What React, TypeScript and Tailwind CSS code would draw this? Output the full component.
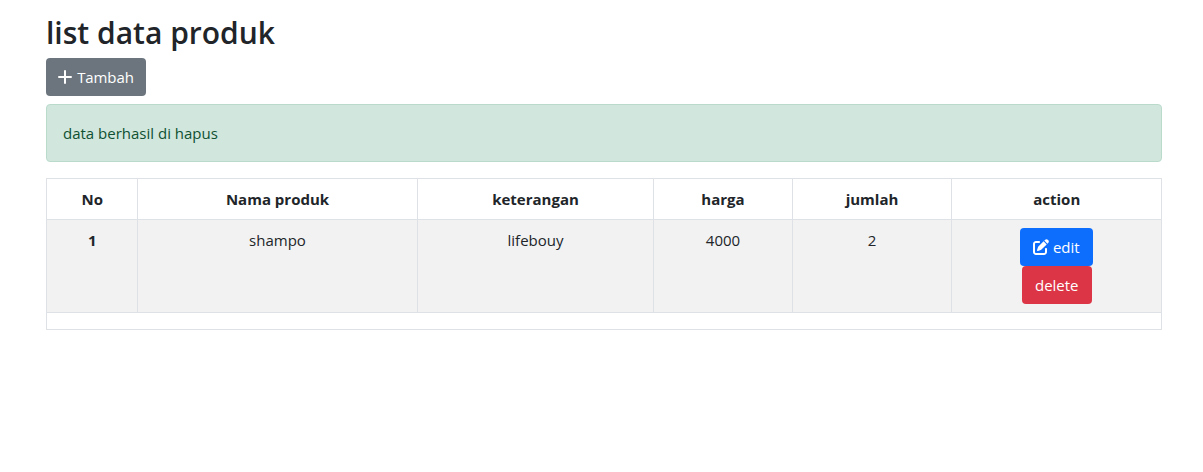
import React from 'react';
import { FaPenToSquare } from 'react-icons/fa6';

const columns = [
  { title: 'No', width: 'w-[90px]' },
  { title: 'Nama produk', width: 'w-[280px]' },
  { title: 'keterangan', width: 'w-[236px]' },
  { title: 'harga', width: 'w-[139px]' },
  { title: 'jumlah', width: 'w-[159px]' },
  { title: 'action', width: '' },
];

function PlusIcon() {
  return (
    <svg width="14" height="14" viewBox="0 0 14 14" fill="none" stroke="currentColor" strokeWidth="2" strokeLinecap="round">
      <path d="M7 1v12M1 7h12" />
    </svg>
  );
}

export default function App() {
  return (
    <div className="min-h-[472px] bg-white px-[46px] pr-[41px] text-[16px] leading-6 text-[#212529] font-['Open_Sans','Noto_Sans',sans-serif]">
      <h1 className="pt-[14px] text-[30px] leading-[38px] font-semibold">list data produk</h1>
      <button className="mt-[6px] flex h-[38px] w-[100px] items-center justify-center gap-[5px] rounded-[4px] bg-[#6c757d] text-[15px] tracking-[-0.1px] text-white">
        <PlusIcon />
        Tambah
      </button>
      <div className="mt-[8px] h-[58px] rounded-[4px] border border-[#badbcc] bg-[#d1e7dd] p-4 text-[15px] text-[#0f5132]">
        data berhasil di hapus
      </div>
      <div className="mt-4 border border-[#dee2e6] pb-4">
        <table className="w-full table-fixed border-collapse text-center text-[15px]">
          <thead>
            <tr className="h-[40px] border-b border-[#dee2e6]">
              {columns.map((col, index) => (
                <th key={index} className={`${col.width} border-l border-[#dee2e6] pl-px font-bold first:border-l-0`}>
                  {col.title}
                </th>
              ))}
            </tr>
          </thead>
          <tbody>
            <tr className="h-[93px] border-b border-[#dee2e6] bg-[#f2f2f2] align-top">
              <th className="pt-2 pl-px font-bold">1</th>
              <td className="border-l border-[#dee2e6] pt-2 pl-px">shampo</td>
              <td className="border-l border-[#dee2e6] pt-2 pl-px">lifebouy</td>
              <td className="border-l border-[#dee2e6] pt-2 pl-px">4000</td>
              <td className="border-l border-[#dee2e6] pt-2 pl-px">2</td>
              <td className="border-l border-[#dee2e6] pt-2">
                <div className="flex flex-col items-center">
                  <button className="flex h-[38px] w-[73px] items-center justify-center gap-[4px] rounded-[4px] bg-[#0d6efd] text-[15px] text-white">
                    <FaPenToSquare size={16} />
                    edit
                  </button>
                  <button className="ml-px h-[38px] w-[70px] rounded-[4px] bg-[#dc3545] text-[15px] text-white">delete</button>
                </div>
              </td>
            </tr>
          </tbody>
        </table>
      </div>
    </div>
  );
}
